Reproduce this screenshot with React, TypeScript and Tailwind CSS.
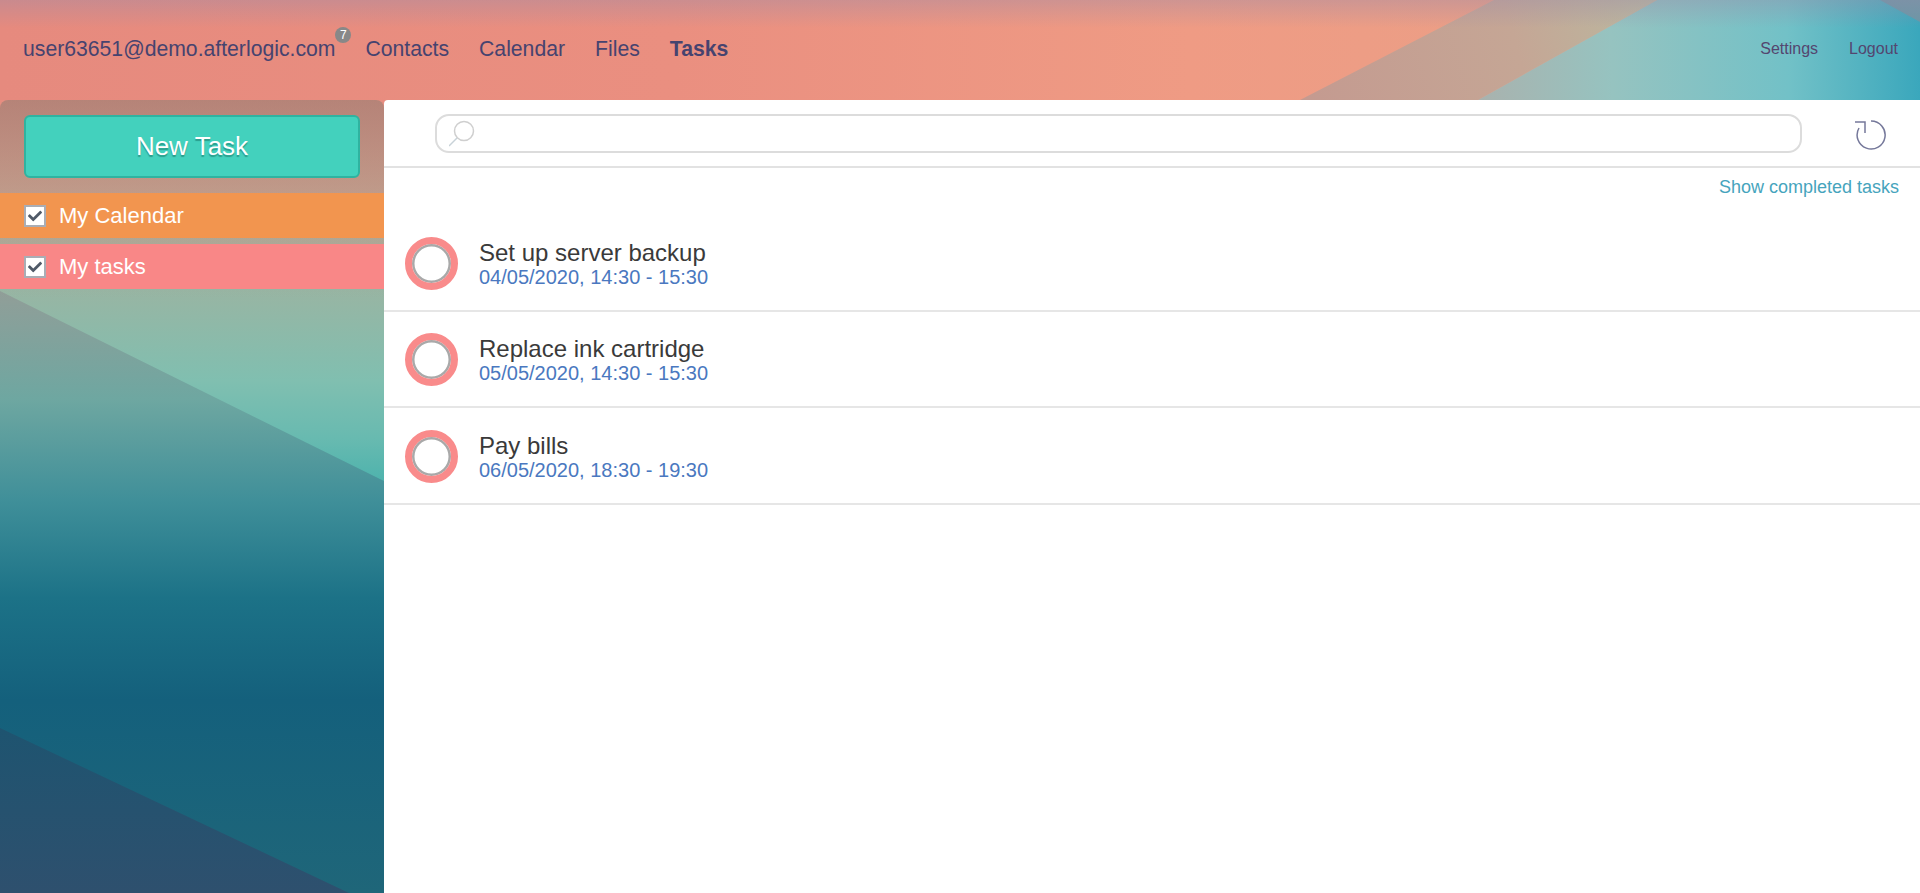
import { FaCheck } from "react-icons/fa";

const tasks = [
  { title: "Set up server backup", time: "04/05/2020, 14:30 - 15:30" },
  { title: "Replace ink cartridge", time: "05/05/2020, 14:30 - 15:30" },
  { title: "Pay bills", time: "06/05/2020, 18:30 - 19:30" },
];

const Wallpaper = () => (
  <svg className="absolute inset-0 w-full h-full" viewBox="0 0 1920 893" preserveAspectRatio="none">
    <defs>
      <linearGradient id="head" x1="0" y1="0" x2="1920" y2="0" gradientUnits="userSpaceOnUse">
        <stop offset="0" stopColor="#e68a7e" />
        <stop offset="0.35" stopColor="#ea8f80" />
        <stop offset="0.62" stopColor="#ef9b84" />
        <stop offset="0.8" stopColor="#eb9f86" />
      </linearGradient>
      <linearGradient id="mauve" x1="1300" y1="100" x2="1657" y2="0" gradientUnits="userSpaceOnUse">
        <stop offset="0" stopColor="#c49a90" />
        <stop offset="0.6" stopColor="#c5a695" />
        <stop offset="1" stopColor="#b9b9a0" />
      </linearGradient>
      <linearGradient id="teal" x1="1480" y1="80" x2="1920" y2="70" gradientUnits="userSpaceOnUse">
        <stop offset="0" stopColor="#a9b2ae" />
        <stop offset="0.3" stopColor="#96c3c0" />
        <stop offset="0.7" stopColor="#72c1c7" />
        <stop offset="1" stopColor="#3aa7bc" />
      </linearGradient>
      <linearGradient id="topFade" x1="0" y1="0" x2="0" y2="28" gradientUnits="userSpaceOnUse">
        <stop offset="0" stopColor="#9a8aa8" stopOpacity="0.38" />
        <stop offset="1" stopColor="#9a8aa8" stopOpacity="0" />
      </linearGradient>
      <linearGradient id="side" x1="0" y1="100" x2="0" y2="480" gradientUnits="userSpaceOnUse">
        <stop offset="0" stopColor="#e88d80" />
        <stop offset="0.25" stopColor="#cda290" />
        <stop offset="0.5" stopColor="#98b5a3" />
        <stop offset="0.74" stopColor="#80bfb0" />
        <stop offset="0.89" stopColor="#68bab0" />
        <stop offset="1" stopColor="#4fb3ad" />
      </linearGradient>
      <linearGradient id="band" x1="0" y1="291" x2="0" y2="893" gradientUnits="userSpaceOnUse">
        <stop offset="0" stopColor="#919e98" />
        <stop offset="0.18" stopColor="#6ea7a1" />
        <stop offset="0.35" stopColor="#3f8f99" />
        <stop offset="0.51" stopColor="#1c7287" />
        <stop offset="0.68" stopColor="#14607c" />
        <stop offset="1" stopColor="#1f6679" />
      </linearGradient>
      <linearGradient id="deep" x1="0" y1="728" x2="0" y2="893" gradientUnits="userSpaceOnUse">
        <stop offset="0" stopColor="#1e5470" />
        <stop offset="1" stopColor="#2e506e" />
      </linearGradient>
    </defs>
    <rect x="0" y="0" width="1920" height="100" fill="url(#head)" />
    <polygon points="1494,0 1657,0 1478,100 1300,100" fill="url(#mauve)" />
    <polygon points="1657,0 1920,0 1920,100 1478,100" fill="url(#teal)" />
    <polygon points="1880,0 1920,0 1920,22" fill="#6a97a6" />
    <rect x="0" y="0" width="1920" height="28" fill="url(#topFade)" />
    <rect x="0" y="100" width="400" height="793" fill="url(#side)" />
    <polygon points="0,291 384,481 384,893 0,893" fill="url(#band)" />
    <polygon points="0,728 349,893 0,893" fill="url(#deep)" />
  </svg>
);

const CalendarRow = ({ name, color }: { name: string; color: string }) => (
  <div className={`flex items-center h-[45px] pl-6 gap-[13px] ${color}`}>
    <span className="flex items-center justify-center w-[22px] h-[22px] bg-white border-2 border-[#a9adb5]">
      <FaCheck className="text-[14px] text-[#505a68]" />
    </span>
    <span className="text-[22px] text-white">{name}</span>
  </div>
);

const App = () => {
  return (
    <div className="relative w-full h-[893px] overflow-hidden font-['Liberation_Sans',Arial,sans-serif]">
      <Wallpaper />
      <div className="relative flex flex-col h-full">
        <header className="flex items-center justify-between h-[100px] pb-[2px] pl-[23px] pr-[22px] text-[#46436f]">
          <nav className="flex items-center gap-[30px] text-[21.2px]">
            <a className="relative">
              user63651@demo.afterlogic.com
              <span className="absolute -right-4 -top-[6px] flex items-center justify-center w-4 h-4 rounded-full bg-[#888888] text-[12px] text-white">7</span>
            </a>
            <a>Contacts</a>
            <a>Calendar</a>
            <a>Files</a>
            <a className="font-bold">Tasks</a>
          </nav>
          <div className="flex items-center gap-[31px] text-[16px] text-[#54466f]">
            <a>Settings</a>
            <a>Logout</a>
          </div>
        </header>
        <div className="flex flex-1 min-h-0">
          <aside className="w-[384px] shrink-0 pt-[15px] rounded-t-lg bg-[linear-gradient(to_bottom,rgba(120,120,110,0.45),rgba(120,120,110,0.15)_100px,rgba(120,120,110,0)_200px)]">
            <button className="block mx-6 w-[336px] h-[63px] rounded-md border-2 border-[#2fb3a0] bg-[#43d1bd] text-[26px] text-white [text-shadow:0_2px_1px_#2a9d8c]">
              New Task
            </button>
            <div className="mt-[15px] flex flex-col gap-[6px]">
              <CalendarRow name="My Calendar" color="bg-[#f2954f]" />
              <CalendarRow name="My tasks" color="bg-[#f98787]" />
            </div>
          </aside>
          <main className="flex-1 bg-white rounded-tr-lg rounded-tl-sm">
            <div className="flex items-center h-[68px] pl-[51px] pr-[33px] border-b-2 border-[#e2e2e2]">
              <div className="flex-1 flex items-center h-[39px] pl-[12px] rounded-[14px] border-2 border-[#dcdcdc]">
                <svg width="30" height="30" viewBox="0 0 30 30" fill="none">
                  <circle cx="15" cy="13" r="9.5" stroke="#cfcfcf" strokeWidth="1.5" />
                  <line x1="8" y1="20" x2="0" y2="28" stroke="#c8d2d8" strokeWidth="1.5" />
                </svg>
              </div>
              <svg className="ml-[51px]" width="34" height="34" viewBox="0 0 34 34" fill="none">
                <path d="M18 5 A14 14 0 1 1 6 12" stroke="#75789a" strokeWidth="1.5" />
                <path d="M2 6 H12 V17" stroke="#75789a" strokeWidth="1.5" />
              </svg>
            </div>
            <div className="flex items-center justify-end h-[47px] pr-[21px] pb-[8px] text-[18px] text-[#46a4bd]">
              Show completed tasks
            </div>
            {tasks.map((task) => (
              <div key={task.title} className="flex items-center h-[96.5px] pt-[2px] pl-[21px] gap-[21px] border-b-2 border-[#e6e6e6]">
                <span className="w-[53px] h-[53px] rounded-full bg-white border-[7px] border-[#f98b8b] shadow-[inset_0_0_0_2.5px_#a9a9a9]" />
                <div className="flex flex-col pt-[3px]">
                  <span className="text-[24px] leading-[24px] text-[#3a3a3a]">{task.title}</span>
                  <span className="text-[20px] leading-[24px] text-[#4a78c0]">{task.time}</span>
                </div>
              </div>
            ))}
          </main>
        </div>
      </div>
    </div>
  );
};

export default App;
